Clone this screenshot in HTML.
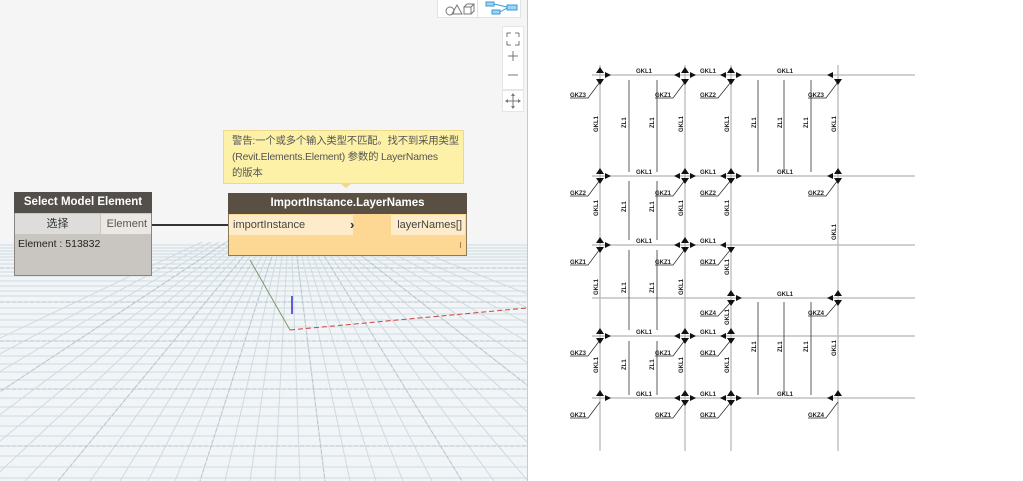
<!DOCTYPE html>
<html><head><meta charset="utf-8"><style>
body{margin:0;width:1023px;height:481px;overflow:hidden;background:#fff;font-family:"Liberation Sans","Noto Sans CJK SC",sans-serif;position:relative}
.abs{position:absolute}
#left{left:0;top:0;width:527px;height:481px;background:#f5f5f5;border-right:1px solid #c9c9c9;overflow:hidden}
</style></head><body>
<div id="left" class="abs">
<svg class="abs" style="left:0;top:0" width="527" height="481">
<rect x="0" y="242" width="527" height="239" fill="#f1f5f7"/>
<g stroke="#cfdae1" stroke-width="1" fill="none">
<path d="M0 245H527M0 248H527M0 251H527M0 254H527M0 257H527M0 260H527M0 264H527M0 268H527M0 272H527M0 276H527M0 281H527M0 286H527M0 291H527M0 296H527M0 302H527M0 308H527M0 314H527M0 320H527M0 327H527M0 334H527M0 341H527M0 348H527M0 356H527M0 364H527M0 372H527M0 380H527M0 389H527M0 398H527M0 407H527M0 416H527M0 426H527M0 436H527M0 446H527M0 456H527M0 467H527M0 478H527"/>
<path d="M290 200L-300 481M290 200L-240 481M290 200L-185 481M290 200L-135 481M290 200L-90 481M290 200L-48 481M290 200L-10 481M290 200L25 481M290 200L58 481M290 200L90 481M290 200L120 481M290 200L148 481M290 200L175 481M290 200L200 481M290 200L225 481M290 200L250 481M290 200L275 481M290 200L300 481M290 200L325 481M290 200L350 481M290 200L376 481M290 200L403 481M290 200L432 481M290 200L462 481M290 200L494 481M290 200L528 481M290 200L565 481M290 200L605 481M290 200L650 481M290 200L700 481M290 200L760 481M290 200L830 481M290 200L910 481M290 200L1000 481"/>
</g>
<rect x="0" y="200" width="527" height="42" fill="#f5f5f5"/>
<g stroke="#b9c5cd" stroke-width="1" stroke-dasharray="4,2"><path d="M0 268H527M0 302H527M0 341H527M0 389H527M0 446H527"/><path d="M290 200L-135 481M290 200L58 481M290 200L200 481M290 200L325 481M290 200L462 481M290 200L650 481"/></g>
<path d="M250 260L290 330" stroke="#7a9a6a" stroke-width="1"/>
<path d="M292 296V314" stroke="#3030c0" stroke-width="1.5"/>
<path d="M290 330L527 308" stroke="#d04040" stroke-width="1" stroke-dasharray="5,3"/>
</svg>
<div class="abs" style="left:437px;top:0;width:40px;height:17px;background:#fff;border:1px solid #e2e2e2;border-top:none"></div>
<svg class="abs" style="left:443px;top:2px" width="32" height="14"><g fill="none" stroke="#777" stroke-width="1"><circle cx="7" cy="9" r="4"/><path d="M9 12L14 3L19 12Z"/><rect x="21" y="5" width="7" height="7"/><path d="M21 5L24 2H31V9L28 12M28 5L31 2"/></g></svg>
<div class="abs" style="left:477px;top:0;width:42px;height:17px;background:#fff;border:1px solid #e2e2e2;border-top:none"></div>
<svg class="abs" style="left:485px;top:1px" width="34" height="14"><g fill="#9fd3f0" stroke="#3a9ad8"><rect x="1" y="1" width="8" height="4"/><rect x="7" y="9" width="8" height="4"/><rect x="22" y="4" width="10" height="5"/></g><path d="M9 3L22 6M15 11L22 7" stroke="#3a9ad8"/></svg>
<div class="abs" style="left:502px;top:26px;width:20px;height:62px;background:#fff;border:1px solid #e6e6e6"></div>
<div class="abs" style="left:502px;top:90px;width:20px;height:20px;background:#fff;border:1px solid #e6e6e6"></div>
<svg class="abs" style="left:502px;top:26px" width="22" height="86"><g stroke="#777" fill="none" stroke-width="1"><path d="M7 13V9H11M15 9H19M19 9V13M7 17V21H11M15 21H19V17" transform="translate(-2,-2)"/><path d="M11 25V35M6 30H16"/><path d="M6 49H16"/><path d="M11 69V81M5 75H17"/></g><g fill="#777"><path d="M11 67L9 70H13Z"/><path d="M11 83L9 80H13Z"/><path d="M3 75L6 73V77Z"/><path d="M19 75L16 73V77Z"/></g></svg>
<div class="abs" style="left:223px;top:130px;width:241px;height:54px;background:#fdf1a8;border:1px solid #ecd98c;font-size:10.4px;line-height:16px;color:#555;padding:3px 0 0 8px;box-sizing:border-box;white-space:nowrap;letter-spacing:-0.2px;overflow:hidden">警告:一个或多个输入类型不匹配。找不到采用类型<br>(Revit.Elements.Element) 参数的 LayerNames<br>的版本</div>
<div class="abs" style="left:340px;top:183px;width:0;height:0;border-left:6px solid transparent;border-right:6px solid transparent;border-top:5px solid #ecd98c"></div>
<div class="abs" style="left:152px;top:224px;width:77px;height:2px;background:#333"></div>
<div class="abs" style="left:14px;top:192px;width:138px;height:84px;background:#c9c6c1;border:1px solid #8a8580;box-sizing:border-box"></div>
<div class="abs" style="left:14px;top:192px;width:138px;height:21px;background:#534f4b;color:#fff;font-weight:bold;font-size:11.5px;line-height:21px;text-align:center">Select Model Element</div>
<div class="abs" style="left:15px;top:214px;width:85px;height:20px;background:#dedddb;font-size:11px;line-height:20px;text-align:center;color:#333">选择</div>
<div class="abs" style="left:101px;top:214px;width:50px;height:20px;background:#ebe8e4;font-size:11px;line-height:20px;text-align:right;color:#555;padding-right:4px;box-sizing:border-box">Element</div>
<div class="abs" style="left:18px;top:238px;font-size:10.5px;color:#222">Element : 513832</div>
<div class="abs" style="left:228px;top:193px;width:239px;height:63px;background:#fcd894;border:1px solid #8a7a5a;box-sizing:border-box"></div>
<div class="abs" style="left:228px;top:193px;width:239px;height:21px;background:#5a4f43;color:#fff;font-weight:bold;font-size:11.5px;line-height:21px;text-align:center">ImportInstance.LayerNames</div>
<div class="abs" style="left:229px;top:215px;width:124px;height:20px;background:#fdebc9;font-size:11px;line-height:20px;color:#444;padding-left:4px;box-sizing:border-box">importInstance</div>
<div class="abs" style="left:350px;top:215px;font-size:13px;line-height:19px;font-weight:bold;color:#333">›</div>
<div class="abs" style="left:391px;top:215px;width:74px;height:20px;background:#fdebc9;font-size:11px;line-height:20px;color:#444;text-align:right;padding-right:3px;box-sizing:border-box">layerNames[]</div>
<div class="abs" style="left:460px;top:242px;width:1px;height:6px;background:#a08050"></div>
</div>
<svg class="abs" style="left:528px;top:0" width="495" height="481" font-family="Liberation Sans" font-size="6" fill="#222">
<g transform="translate(-528,0)">
<g stroke="#b5b5b5" stroke-width="1.2">
<path d="M592 75H915M592 176H915M592 245H915M592 298H915M592 336H915M592 398H915"/>
<path d="M600 65V451M685 65V451M731 65V451M838 65V451"/>
</g>
<g stroke="#333" stroke-width="0.8">
<path d="M629 80V172M657 80V172M629 181V240M657 181V240M629 250V330M657 250V330M629 341V395M657 341V395"/>
<path d="M758 80V172M784 80V172M811 80V172M758 302V395M784 302V395M811 302V395"/>
</g>
<g stroke="#222" stroke-width="0.7" fill="none">
<path d="M570 98H588L600 82M655 98H673L685 82M700 98H718L731 82M808 98H826L838 82M570 196H588L600 180M655 196H673L685 180M700 196H718L731 180M808 196H826L838 180M570 265H588L600 249M655 265H673L685 249M700 265H718L731 249M700 316H718L731 302M808 316H826L838 302M570 356H588L600 340M655 356H673L685 340M700 356H718L731 340M570 418H588L600 402M655 418H673L685 402M700 418H718L731 402M808 418H826L838 402"/>
</g>
<g fill="#111">
<path d="M596 73L600 67L604 73ZM596 79L600 85L604 79ZM605 72L611 75L605 78Z"/>
<path d="M681 73L685 67L689 73ZM681 79L685 85L689 79ZM680 72L674 75L680 78ZM690 72L696 75L690 78Z"/>
<path d="M727 73L731 67L735 73ZM727 79L731 85L735 79ZM726 72L720 75L726 78ZM736 72L742 75L736 78Z"/>
<path d="M834 79L838 85L842 79ZM833 72L827 75L833 78Z"/>
<path d="M596 174L600 168L604 174ZM596 178L600 184L604 178ZM605 173L611 176L605 179Z"/>
<path d="M681 174L685 168L689 174ZM681 178L685 184L689 178ZM680 173L674 176L680 179ZM690 173L696 176L690 179Z"/>
<path d="M727 174L731 168L735 174ZM727 178L731 184L735 178ZM726 173L720 176L726 179ZM736 173L742 176L736 179Z"/>
<path d="M834 174L838 168L842 174ZM834 178L838 184L842 178ZM833 173L827 176L833 179Z"/>
<path d="M596 243L600 237L604 243ZM596 247L600 253L604 247ZM605 242L611 245L605 248Z"/>
<path d="M681 243L685 237L689 243ZM681 247L685 253L689 247ZM680 242L674 245L680 248ZM690 242L696 245L690 248Z"/>
<path d="M727 247L731 253L735 247ZM726 242L720 245L726 248Z"/>
<path d="M727 296L731 290L735 296ZM727 300L731 306L735 300ZM736 295L742 298L736 301Z"/>
<path d="M834 296L838 290L842 296ZM834 300L838 306L842 300ZM833 295L827 298L833 301Z"/>
<path d="M596 334L600 328L604 334ZM596 338L600 344L604 338ZM605 333L611 336L605 339Z"/>
<path d="M681 334L685 328L689 334ZM681 338L685 344L689 338ZM680 333L674 336L680 339ZM690 333L696 336L690 339Z"/>
<path d="M727 334L731 328L735 334ZM727 338L731 344L735 338ZM726 333L720 336L726 339Z"/>
<path d="M596 396L600 390L604 396ZM605 395L611 398L605 401Z"/>
<path d="M681 396L685 390L689 396ZM681 400L685 406L689 400ZM680 395L674 398L680 401ZM690 395L696 398L690 401Z"/>
<path d="M727 396L731 390L735 396ZM727 400L731 406L735 400ZM726 395L720 398L726 401ZM736 395L742 398L736 401Z"/>
<path d="M834 396L838 390L842 396ZM833 395L827 398L833 401Z"/>
</g>
<g font-weight="bold">
<text x="636" y="73">GKL1</text><text x="700" y="73">GKL1</text><text x="777" y="73">GKL1</text>
<text x="636" y="174">GKL1</text><text x="700" y="174">GKL1</text><text x="777" y="174">GKL1</text>
<text x="636" y="243">GKL1</text><text x="700" y="243">GKL1</text><text x="777" y="296">GKL1</text>
<text x="636" y="334">GKL1</text><text x="700" y="334">GKL1</text>
<text x="636" y="396">GKL1</text><text x="700" y="396">GKL1</text><text x="777" y="396">GKL1</text>
<text x="570" y="97">GKZ3</text><text x="655" y="97">GKZ1</text><text x="700" y="97">GKZ2</text><text x="808" y="97">GKZ3</text>
<text x="570" y="195">GKZ2</text><text x="655" y="195">GKZ1</text><text x="700" y="195">GKZ2</text><text x="808" y="195">GKZ2</text>
<text x="570" y="264">GKZ1</text><text x="655" y="264">GKZ1</text><text x="700" y="264">GKZ1</text>
<text x="700" y="315">GKZ4</text><text x="808" y="315">GKZ4</text>
<text x="570" y="355">GKZ3</text><text x="655" y="355">GKZ1</text><text x="700" y="355">GKZ1</text>
<text x="570" y="417">GKZ1</text><text x="655" y="417">GKZ1</text><text x="700" y="417">GKZ1</text><text x="808" y="417">GKZ4</text>
</g>
<g font-weight="bold">
<text transform="translate(598,132) rotate(-90)">GKL1</text><text transform="translate(626,128) rotate(-90)">ZL1</text><text transform="translate(654,128) rotate(-90)">ZL1</text><text transform="translate(683,132) rotate(-90)">GKL1</text>
<text transform="translate(729,132) rotate(-90)">GKL1</text><text transform="translate(756,128) rotate(-90)">ZL1</text><text transform="translate(782,128) rotate(-90)">ZL1</text><text transform="translate(808,128) rotate(-90)">ZL1</text><text transform="translate(836,132) rotate(-90)">GKL1</text>
<text transform="translate(598,216) rotate(-90)">GKL1</text><text transform="translate(626,212) rotate(-90)">ZL1</text><text transform="translate(654,212) rotate(-90)">ZL1</text><text transform="translate(683,216) rotate(-90)">GKL1</text><text transform="translate(729,216) rotate(-90)">GKL1</text><text transform="translate(836,240) rotate(-90)">GKL1</text>
<text transform="translate(598,295) rotate(-90)">GKL1</text><text transform="translate(626,293) rotate(-90)">ZL1</text><text transform="translate(654,293) rotate(-90)">ZL1</text><text transform="translate(683,295) rotate(-90)">GKL1</text><text transform="translate(729,275) rotate(-90)">GKL1</text><text transform="translate(729,325) rotate(-90)">GKL1</text>
<text transform="translate(756,352) rotate(-90)">ZL1</text><text transform="translate(782,352) rotate(-90)">ZL1</text><text transform="translate(808,352) rotate(-90)">ZL1</text><text transform="translate(836,356) rotate(-90)">GKL1</text>
<text transform="translate(598,373) rotate(-90)">GKL1</text><text transform="translate(626,370) rotate(-90)">ZL1</text><text transform="translate(654,370) rotate(-90)">ZL1</text><text transform="translate(683,373) rotate(-90)">GKL1</text><text transform="translate(729,373) rotate(-90)">GKL1</text>
</g>
</g>
</svg>
</body></html>
